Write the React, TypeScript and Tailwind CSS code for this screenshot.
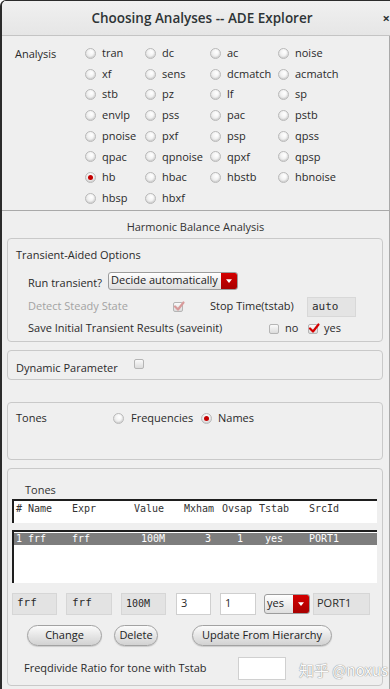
import React from "react"

const sans = "font-['Open_Sans','Noto_Sans',sans-serif]"
const mono = "font-['DejaVu_Sans_Mono',monospace]"

const analyses = [
  ["tran", "dc", "ac", "noise"],
  ["xf", "sens", "dcmatch", "acmatch"],
  ["stb", "pz", "lf", "sp"],
  ["envlp", "pss", "pac", "pstb"],
  ["pnoise", "pxf", "psp", "qpss"],
  ["qpac", "qpnoise", "qpxf", "qpsp"],
  ["hb", "hbac", "hbstb", "hbnoise"],
  ["hbsp", "hbxf"],
]

function Radio({ checked = false }: { checked?: boolean }) {
  return (
    <span className="flex h-[11px] w-[11px] shrink-0 items-center justify-center rounded-full border border-[#b9b9b9] bg-[radial-gradient(circle_at_60%_35%,#ffffff_0%,#f2f2f2_45%,#cfcfcf_100%)] shadow-[inset_-1px_-1px_1px_rgba(0,0,0,0.08)]">
      {checked && <span className="h-[5px] w-[5px] rounded-full bg-[#c40000]" />}
    </span>
  )
}

function Check({ checked = false, dim = false }: { checked?: boolean; dim?: boolean }) {
  return (
    <span className="relative inline-block h-[10px] w-[10px] shrink-0 rounded-[2px] border border-[#b5b5b5] bg-gradient-to-b from-[#fafafa] to-[#dcdcdc]">
      {checked && (
        <svg viewBox="0 0 12 12" className="absolute -left-[1px] -top-[3px] h-[12px] w-[12px]">
          <path
            d="M2 6.5 L5 9.5 L10.5 2.5"
            fill="none"
            stroke={dim ? "#d89a9a" : "#d40000"}
            strokeWidth="2.2"
            strokeLinecap="round"
            strokeLinejoin="round"
          />
        </svg>
      )}
    </span>
  )
}

function Select({ label, className }: { label: string; className: string }) {
  return (
    <div
      className={`flex items-stretch overflow-hidden rounded-[3px] border border-[#9c9c9c] bg-gradient-to-b from-[#ffffff] to-[#dedede] ${className}`}
    >
      <span className="flex flex-1 items-center pl-[2px] text-[11px] text-[#222]">{label}</span>
      <span className="flex w-[16px] items-center justify-center bg-gradient-to-b from-[#d40000] to-[#a80000]">
        <svg viewBox="0 0 8 5" className="h-[4px] w-[6px]">
          <path d="M0 0 L8 0 L4 5 Z" fill="#fff" />
        </svg>
      </span>
    </div>
  )
}

function Btn({ children, className }: { children: React.ReactNode; className: string }) {
  return (
    <button
      className={`flex h-[21px] items-center justify-center rounded-full border border-[#a2a2a2] bg-gradient-to-b from-[#fbfbfb] to-[#d2d2d2] text-[11px] text-[#222] shadow-[0_1px_1px_rgba(0,0,0,0.15)] ${className}`}
    >
      {children}
    </button>
  )
}

function Group({ children, className }: { children: React.ReactNode; className: string }) {
  return (
    <div className={`mx-[5px] w-[376px] rounded-[4px] border border-[#c9c9c9] ${className}`}>{children}</div>
  )
}

export default function App() {
  return (
    <div
      className={`relative h-[689px] w-[390px] overflow-hidden rounded-tl-[6px] border-l-2 border-t border-[#2b2b2b] bg-[#efefef] text-[11px] text-[#2a2a2a] ${sans}`}
    >
      {/* title bar */}
      <div className="relative flex h-[35px] items-center justify-center border-b border-[#c4c4c4] bg-gradient-to-b from-[#f0f0f0] to-[#e6e6e6]">
        <span className="pl-[12px] text-[13.5px] font-semibold text-[#2e3436]">Choosing Analyses -- ADE Explorer</span>
        <span className="absolute right-[0px] top-[9px] text-[13px] font-bold leading-[16px] text-[#2e3436]">×</span>
      </div>

      {/* analysis list */}
      <div className="flex border-b border-r border-[#a9a9a9] pb-[1px] pt-[7px]">
        <div className="w-[83px] pl-[13px] leading-[21px]">Analysis</div>
        <div className="grid grid-cols-[60px_65px_68px_auto]">
          {analyses.flat().map((a) => (
            <div key={a} className="flex h-[20.7px] items-center gap-[6px]">
              <Radio checked={a === "hb"} />
              <span>{a}</span>
            </div>
          ))}
        </div>
      </div>

      <div className="border-r border-[#a9a9a9] pb-[4px]">
        <div className="pt-[8px] text-center leading-[16px] text-[#333]">Harmonic Balance Analysis</div>

        {/* transient options */}
        <Group className="mt-[3px] h-[104px] pl-[8px]">
          <div className="mt-[8px] leading-[16px]">Transient-Aided Options</div>
          <div className="mt-[9px] flex h-[18px] items-center pl-[12px]">
            <span className="mt-[6px] w-[80px]">Run transient?</span>
            <Select label="Decide automatically" className="h-[18px] w-[130px]" />
          </div>
          <div className="mt-[7px] flex h-[20px] items-center pl-[12px]">
            <span className="w-[145px] text-[#a3a3a3]">Detect Steady State</span>
            <Check checked dim />
            <span className="ml-[27px] w-[97px]">Stop Time(tstab)</span>
            <span className={`flex h-[20px] w-[49px] items-center border border-[#d8d8d8] bg-[#e4e4e4] pl-[4px] pt-[1px] text-[11px] ${mono}`}>
              auto
            </span>
          </div>
          <div className="mt-[5px] flex h-[14px] items-center pl-[12px]">
            <span className="w-[241px]">Save Initial Transient Results (saveinit)</span>
            <Check />
            <span className="ml-[6px] w-[23px]">no</span>
            <Check checked />
            <span className="ml-[6px]">yes</span>
          </div>
        </Group>

        {/* dynamic parameter */}
        <Group className="mt-[8px] flex h-[30px] items-end pb-[4px] pl-[8px]">
          <span className="w-[118px] leading-[14px]">Dynamic Parameter</span>
          <span className="mb-[1px]">
            <Check />
          </span>
        </Group>

        {/* tones mode */}
        <Group className="mt-[22px] h-[58px] pl-[8px] pt-[8px]">
          <div className="flex h-[16px] items-center">
            <span className="w-[97px]">Tones</span>
            <Radio />
            <span className="ml-[7px] w-[70px]">Frequencies</span>
            <Radio checked />
            <span className="ml-[6px]">Names</span>
          </div>
        </Group>

        {/* tones table */}
        <Group className="mt-[8px] h-[218px] pl-[4px] pr-[5px]">
          <div className="ml-[13px] mt-[14px] leading-[14px] text-[#333]">Tones</div>
          <div
            className={`mt-[2px] h-[24px] border-l-2 border-t-2 border-[#1e1e1e] bg-white pl-[2px] pt-[1px] text-[10px] leading-[13px] text-[#333] ${mono}`}
          >
            <div className="flex whitespace-pre">
              <span className="w-[12px]">#</span>
              <span className="w-[44px]">Name</span>
              <span className="w-[62px]">Expr</span>
              <span className="w-[50px]">Value</span>
              <span className="w-[38px]">Mxham</span>
              <span className="w-[37px]">Ovsap</span>
              <span className="w-[50px]">Tstab</span>
              <span>SrcId</span>
            </div>
          </div>
          <div className={`mt-[7px] h-[53px] border-l-2 border-t-2 border-[#1e1e1e] bg-white pt-[1px] text-[10px] ${mono}`}>
            <div className="flex h-[12px] items-center whitespace-pre bg-[#7e7e7e] pl-[2px] text-white">
              <span className="w-[12px]">1</span>
              <span className="w-[44px]">frf</span>
              <span className="w-[69px]">frf</span>
              <span className="w-[64px]">100M</span>
              <span className="w-[32px]">3</span>
              <span className="w-[28px]">1</span>
              <span className="w-[44px]">yes</span>
              <span>PORT1</span>
            </div>
          </div>

          <div className="mt-[10px] flex h-[22px] items-center">
            <span className={`flex h-[22px] w-[45px] items-center border border-[#d6d6d6] bg-[#e3e3e3] pl-[4px] ${mono}`}>frf</span>
            <span className={`ml-[9px] flex h-[22px] w-[46px] items-center border border-[#d6d6d6] bg-[#e3e3e3] pl-[5px] ${mono}`}>frf</span>
            <span className={`ml-[9px] flex h-[22px] w-[45px] items-center border border-[#d6d6d6] bg-[#e3e3e3] pl-[4px] text-[10px] ${mono}`}>100M</span>
            <span className="ml-[10px] flex h-[22px] w-[35px] items-center border border-[#cfcfcf] bg-white pl-[4px]">3</span>
            <span className="ml-[9px] flex h-[22px] w-[36px] items-center border border-[#cfcfcf] bg-white pl-[4px]">1</span>
            <Select label="yes" className="ml-[8px] h-[20px] w-[46px]" />
            <span className="ml-[3px] flex h-[22px] w-[57px] items-center border border-[#d6d6d6] bg-[#e3e3e3] pl-[3px]">PORT1</span>
          </div>

          <div className="mt-[10px] flex">
            <Btn className="ml-[15px] w-[75px]">Change</Btn>
            <Btn className="ml-[12px] w-[44px]">Delete</Btn>
            <Btn className="ml-[34px] w-[140px]">Update From Hierarchy</Btn>
          </div>

          <div className="mt-[11px] flex items-center">
            <span className="ml-[12px] w-[214px]">Freqdivide Ratio for tone with Tstab</span>
            <span className="h-[23px] w-[48px] border border-[#d0d0d0] bg-white" />
          </div>
        </Group>
      </div>

      <span className="absolute left-[297px] top-[658px] font-['Noto_Sans_CJK_SC',sans-serif] text-[15px] text-[#fbfbfb] [text-shadow:0_0_1px_#8a8a8a,0_0_1px_#8a8a8a]">
        知乎 @noxus
      </span>
    </div>
  )
}
